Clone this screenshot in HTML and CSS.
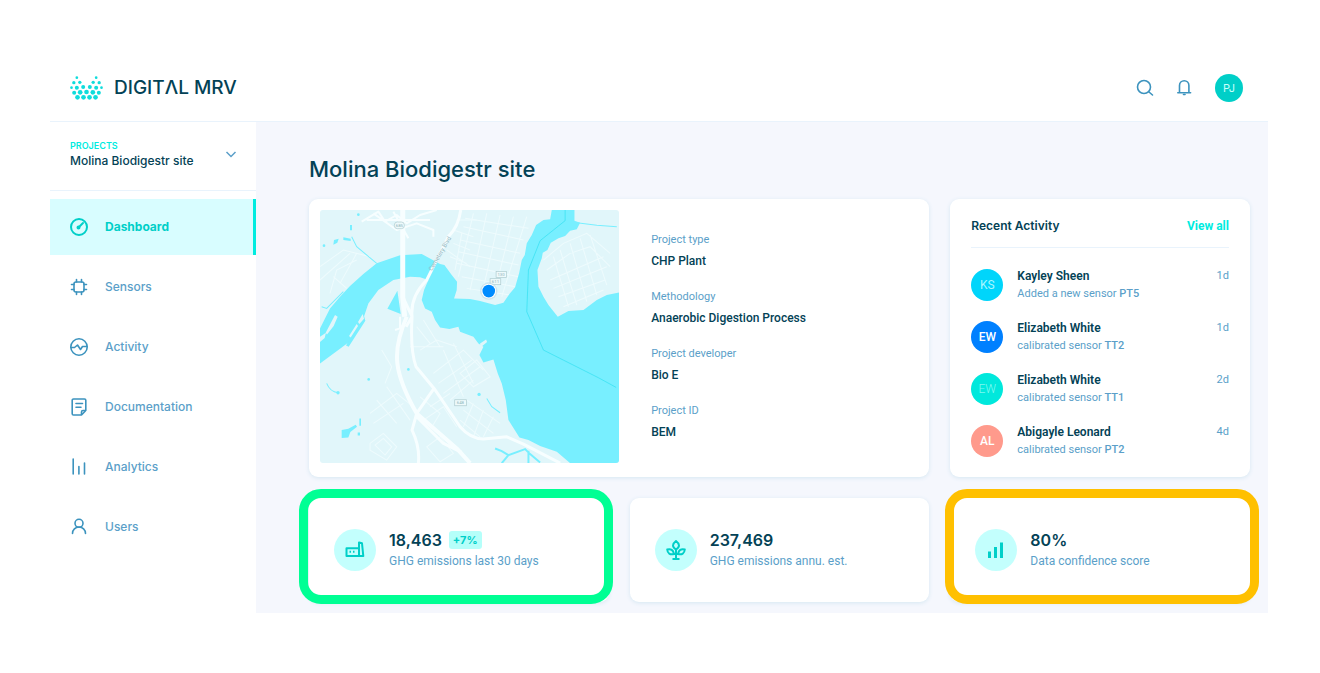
FILE: index.html
```html
<!DOCTYPE html>
<html lang="en">
<head>
<meta charset="utf-8">
<meta name="viewport" content="width=device-width, initial-scale=1">
<title>Digital MRV – Molina Biodigestr site</title>
<link rel="stylesheet" href="styles.css">
</head>
<body>
<div class="app">
  <header class="topbar">
    <a class="brand" href="#" aria-label="Digital MRV">
      <svg class="brand-mark" viewBox="0 0 98 72" fill="#0fdcdc" aria-hidden="true">
        <circle cx="20" cy="5" r="4"/><circle cx="78" cy="5" r="4"/>
        <circle cx="11" cy="20" r="5"/><circle cx="29" cy="19" r="5"/><circle cx="69" cy="19" r="5"/><circle cx="87" cy="20" r="5"/>
        <circle cx="4" cy="35" r="4"/><circle cx="20" cy="35" r="6"/><circle cx="39" cy="33" r="6"/><circle cx="59" cy="33" r="6"/><circle cx="78" cy="35" r="6"/><circle cx="94" cy="35" r="4"/>
        <circle cx="12" cy="50" r="6"/><circle cx="30" cy="49" r="7"/><circle cx="49" cy="48" r="7"/><circle cx="68" cy="49" r="7"/><circle cx="86" cy="50" r="6"/>
        <circle cx="22" cy="64" r="7"/><circle cx="40" cy="64" r="7"/><circle cx="58" cy="64" r="7"/><circle cx="76" cy="64" r="7"/>
      </svg>
      <span class="brand-name">DIGITΛL MRV</span>
    </a>
    <div class="tools">
      <button class="icon-button" type="button" aria-label="Search">
        <svg class="icon" viewBox="0 0 20 20"><circle cx="9" cy="9" r="6.500"/><path d="M14 14l3.500 3"/></svg>
      </button>
      <button class="icon-button" type="button" aria-label="Notifications">
        <svg class="icon" viewBox="0 0 20 20"><path d="M4.500 14.500V7.500a4.700 4.700 0 0 1 9.400 0V14.500M2.800 14.700h12.800"/><path d="M8.500 16.500h1.500"/></svg>
      </button>
      <button class="user" type="button">PJ</button>
    </div>
  </header>

  <div class="body">
    <aside class="sidebar">
      <div class="project">
        <label class="project-label" for="project">PROJECTS</label>
        <select class="project-select" id="project"><option>Molina Biodigestr site</option></select>
        <svg class="chevron" viewBox="0 0 12 12" aria-hidden="true"><path d="M1.500 4L6 8.500 10.500 4"/></svg>
      </div>
      <nav class="nav">
        <a class="nav-item active" href="#">
          <svg class="icon" viewBox="0 0 20 20"><circle cx="10" cy="10" r="8"/><path d="M10 10l4-4"/><circle cx="9.500" cy="10.500" r="1" fill="currentColor"/></svg>Dashboard</a>
        <a class="nav-item" href="#">
          <svg class="icon" viewBox="0 0 20 20"><rect x="5" y="5" width="10" height="10" rx="2"/><path d="M7.500 5V2.500M12.500 5V2.500M7.500 17.500V15M12.500 17.500V15M5 7.500H2.500M5 12.500H2.500M17.500 7.500H15M17.500 12.500H15"/></svg>Sensors</a>
        <a class="nav-item" href="#">
          <svg class="icon" viewBox="0 0 20 20"><circle cx="10" cy="10" r="8.200"/><path d="M2 10.500h3.500L8.500 8l3 4.500L13.500 9.500H18"/></svg>Activity</a>
        <a class="nav-item" href="#">
          <svg class="icon" viewBox="0 0 20 20"><path d="M4.500 2h11a1.300 1.300 0 0 1 1.300 1.300V13.500L12.500 18h-8a1.300 1.300 0 0 1-1.300-1.300V3.300A1.300 1.300 0 0 1 4.500 2zM12.500 18v-3a1.500 1.500 0 0 1 1.500-1.500h2.800M7 6.500h6.500M7 10.200h5"/></svg>Documentation</a>
        <a class="nav-item" href="#">
          <svg class="icon" viewBox="0 0 20 20"><path d="M4.200 2v15M9.900 9.500V17M15.500 6v11"/></svg>Analytics</a>
        <a class="nav-item" href="#">
          <svg class="icon" viewBox="0 0 20 20"><circle cx="10" cy="6.300" r="4"/><path d="M3.500 16.500a6.500 6.500 0 0 1 13 0"/></svg>Users</a>
      </nav>
    </aside>

    <main class="main">
      <h1 class="title">Molina Biodigestr site</h1>
      <div class="grid">
        <section class="card overview">
          <svg class="map" viewBox="30 30 897 759" preserveAspectRatio="xMidYMid slice" role="img" aria-label="Site map">
            <rect x="30" y="30" width="897" height="759" fill="#e1f6fa"/>
            <!-- neighbourhood streets -->
            <g fill="none" stroke="#eefbfd" stroke-width="3">
              <path d="M30 200l70-50 80 20M60 280l20-70 60-30M90 250l50-90M30 240l90-80M110 265l-40-35"/>
              <path d="M460 80l180 40M450 120l180 40M445 155l180 40M440 190l185 40M455 230l160 30M470 265l130 20M490 40l-45 190M530 40l-50 230M570 45l-55 240M610 50l-60 240M650 50l-75 240M465 55l190 30"/>
              <path d="M700 180l60-50 70-30 70 60M710 210l70-50 60-20 60 60M720 240l160-70M730 265l160-65M745 290l140-50M760 320l120-50M750 150l50 165M780 130l50 175M810 115l50 170M840 105l50 150M730 170l45 150"/>
              <path d="M180 640l80-60 50 40M190 670l90-60M230 560l70 100M200 600l60 70M180 730l40-30 40 40-30 40-50-30zM195 735l25-20 25 25-20 25z"/>
              <path d="M370 520l90-70 60 60M385 550l100-70M400 580l110-80M420 600l70-60M400 450l60 140M430 430l60 120M330 450l50-30 60 20M320 380l40 50M340 360l50 80M300 440h100"/>
              <path d="M450 520l50-40 40 50-50 30zM470 600l100 70M460 630l90 70M450 660l60 50M490 610l-30 70M520 630l-30 80M550 650l-30 60M350 740l40-30 40 50-40 25z"/>
              <path d="M330 590l60 50-30 50M360 620l60-40M340 660l60-40 40 60M215 450l30 50-20 50"/>
              <path d="M440 60h60M430 90l60 20M430 130l50 20M420 170l50 20M410 150l70 50M455 100l-20 110"/>
            </g>
            <path fill="#78efff" d="M30 385L60 325 90 290 120 258 160 222 200 190 270 166 335 162 390 192 403 195 425 225 441 245 440 270 432 295 480 297 510 303 555 315 580 308 598 282 615 262 627 220 635 180 644 165 650 130 665 105 678 75 700 60 720 58 725 30H793V62L810 68 800 88 780 92 765 108 745 115 722 128 712 150 698 158 695 175 682 210 685 260 700 290 715 315 743 350 775 333 820 330 860 300 890 285 927 277V789H780L740 755 690 738 655 720 628 712 595 660 587 600 575 550 563 520 550 478 520 487 508 465 520 440 505 430 490 410 450 395 445 380 418 387 390 382 375 360 365 335 345 325 335 300 342 270 355 240 330 232 300 230 250 240 205 270 175 310 160 355 125 420 85 450 30 490Z"/>
            <g fill="#78efff">
              <path d="M262 272l10 70-40-16zM160 340l6 22-50 78-8-4zM95 690l20-4 22-12 4 6-20 16-6 16-20 2zM148 655h5v22h-5zM143 697h7v9h-7zM72 120l14-4-4 12-12 6zM100 112l22 4v7l-22-3zM120 75h6v16h-6z"/>
              <circle cx="295" cy="508" r="4"/><circle cx="176" cy="538" r="4"/><circle cx="84" cy="578" r="5"/><circle cx="145" cy="44" r="4"/><circle cx="42" cy="137" r="4"/><circle cx="507" cy="583" r="5"/>
            </g>
            <g fill="#e1f6fa">
              <path d="M75 345l8 5-12 28-20 25-4-5zM30 410l18-12-4 16-14 12zM158 342l4 14-14 16-4-6zM140 372l4 6-22 34-5-4zM510 430l18-12 3 8-20 16z"/>
            </g>
            <g fill="none" stroke="#78efff" stroke-width="3">
              <path d="M125 110l15 30 60 50M35 320l15 5 50-50M50 550q10 25 34 28M530 595l15 25 25 18M800 68l60 8 60 4"/>
              <path stroke-width="6" d="M555 745l20 8 20 12 50-18 15 15 30 25M595 765l-20 24M655 752v37"/>
            </g>
            <g fill="none" stroke="#f7feff" stroke-linejoin="round">
              <path stroke-width="15" d="M278 30V290L284 350"/>
              <path stroke-width="12" d="M290 350Q255 430 262 490T320 640L440 745 480 789"/>
              <path stroke-width="9" d="M452 30Q445 80 415 110L350 240Q300 290 306 350 300 450 318 500L372 565 450 680Q480 715 520 717L590 710 640 732 750 789M372 565L320 640 306 690Q330 740 325 789M320 650L400 730 455 757M278 290l28 60-18 30"/>
              <path stroke-width="6" d="M155 65l50-30 20 30 35-20 30 25 40-25 50-15M190 40l70 50 60-20 50 20v20M170 60h190M250 35l45 80M270 350v35l-15 5"/>
            </g>
            <path fill="none" stroke="#31dff0" stroke-width="2" d="M765 30V62L690 122 655 210 650 335 700 450 865 533 918 562"/>
            <g fill="#eefafb" stroke="#aac9cd" stroke-width="2"><rect x="253" y="66" width="30" height="20" rx="9"/><rect x="434" y="599" width="35" height="18"/><rect x="558" y="214" width="31" height="18"/><rect x="540" y="236" width="32" height="18"/></g>
            <g class="map-text"><text x="268" y="81">685</text><text x="451" y="613">648</text><text x="573" y="228">130</text><text x="556" y="250">611</text><text class="map-road" transform="translate(366 214) rotate(-60)">Cemetery Blvd</text></g>
            <circle cx="536" cy="273" r="26" fill="#bfdbe6" opacity=".6"/><circle cx="536" cy="273" r="22" fill="#fff"/><circle cx="536" cy="273" r="19" fill="#008cff"/>
          </svg>
          <dl class="facts">
            <div><dt>Project type</dt><dd>CHP Plant</dd></div>
            <div><dt>Methodology</dt><dd>Anaerobic Digestion Process</dd></div>
            <div><dt>Project developer</dt><dd>Bio E</dd></div>
            <div><dt>Project ID</dt><dd>BEM</dd></div>
          </dl>
        </section>

        <section class="card activity">
          <div class="activity-head"><h2>Recent Activity</h2><a href="#">View all</a></div>
          <ul class="feed">
            <li><span class="avatar sky">KS</span><div class="entry"><strong>Kayley Sheen</strong><p>Added a new sensor <b>PT5</b></p></div><time>1d</time></li>
            <li><span class="avatar blue">EW</span><div class="entry"><strong>Elizabeth White</strong><p>calibrated sensor <b>TT2</b></p></div><time>1d</time></li>
            <li><span class="avatar mint">EW</span><div class="entry"><strong>Elizabeth White</strong><p>calibrated sensor <b>TT1</b></p></div><time>2d</time></li>
            <li><span class="avatar coral">AL</span><div class="entry"><strong>Abigayle Leonard</strong><p>calibrated sensor <b>PT2</b></p></div><time>4d</time></li>
          </ul>
        </section>

        <section class="card stat mark-green">
          <span class="stat-icon"><svg viewBox="0 0 20 20"><path d="M1.500 8.300H14V16H1.500zM14 16V2.500l3 .8 1.300 12.700z"/><path d="M4.500 11.800h1.500M8 11.800h1.500"/></svg></span>
          <div><p class="value">18,463 <span class="badge">+7%</span></p><p class="caption">GHG emissions last 30 days</p></div>
        </section>
        <section class="card stat">
          <span class="stat-icon"><svg viewBox="0 0 20 20"><path d="M10 1c-4 3-4 6 0 8.500C14 7 14 4 10 1zM10 9.500V19M6.500 19h7M1.200 9.500c3.800-1 6 .5 6.800 4.500-4 1-6.400-.5-6.800-4.500zM18.800 9.500c-3.800-1-6 .5-6.800 4.500 4 1 6.400-.5 6.800-4.500zM8 14h4"/></svg></span>
          <div><p class="value">237,469</p><p class="caption">GHG emissions annu. est.</p></div>
        </section>
        <section class="card stat mark-amber">
          <span class="stat-icon"><svg viewBox="0 0 20 20"><path class="bars" d="M3.500 11.500V18M9.500 7v11M15.500 2.500V18"/></svg></span>
          <div><p class="value">80%</p><p class="caption">Data confidence score</p></div>
        </section>
      </div>
    </main>
  </div>
</div>
</body>
</html>
```

FILE: styles.css
```css
:root {
  --ink: #034256;
  --muted: #5b9fc9;
  --icon: #3c93be;
  --teal: #00cfc8;
  --bright: #00ecdf;
  --line: #e9f3fc;
  --display: Inter, "Open Sans", sans-serif;
}

* { box-sizing: border-box; }

body {
  margin: 0;
  padding: 55px 52px 59px 50px;
  background: #fff;
  color: var(--ink);
  font: 12px/20px Roboto, sans-serif;
}

h1, h2, p, ul, dl, dd { margin: 0; padding: 0; }
a { text-decoration: none; }
button { border: 0; background: none; padding: 0; font: inherit; cursor: pointer; }

.topbar {
  display: flex;
  align-items: center;
  justify-content: space-between;
  height: 67px;
  padding: 0 25px 0 20px;
  border-bottom: 1px solid var(--line);
}
.brand { display: flex; align-items: center; gap: 11px; color: var(--ink); }
.brand-mark { width: 33px; height: 24px; }
.brand-name { font: 500 19px/24px var(--display); }
.tools { display: flex; align-items: center; gap: 20px; }
.icon-button { display: flex; color: var(--icon); }
.icon {
  width: 20px;
  height: 20px;
  fill: none;
  stroke: currentColor;
  stroke-width: 1.6;
  stroke-linecap: round;
  stroke-linejoin: round;
}
.user {
  width: 28px;
  height: 28px;
  border-radius: 50%;
  background: var(--teal);
  color: #c8fffb;
  font: 11px/28px var(--display);
}

.body { display: flex; }

.sidebar { flex: 0 0 206px; }
.project {
  display: grid;
  grid-template-columns: 1fr 12px;
  align-content: center;
  align-items: center;
  height: 69px;
  padding: 0 19px 4px 20px;
  border-bottom: 1px solid var(--line);
}
.project-label {
  color: var(--bright);
  font: 600 9px/14px var(--display);
}
.project-select {
  grid-row: 2;
  width: 100%;
  padding: 0;
  border: 0;
  appearance: none;
  background: none;
  color: var(--ink);
  font: 500 12px/16px var(--display);
}
.chevron {
  grid-area: 1 / 2 / 3 / 3;
  width: 12px;
  height: 12px;
  fill: none;
  stroke: var(--muted);
  stroke-width: 1.5;
}
.nav { display: flex; flex-direction: column; gap: 4px; padding-top: 8px; }
.nav-item {
  display: flex;
  align-items: center;
  gap: 16px;
  height: 56px;
  padding-left: 19px;
  color: var(--muted);
  font: 500 12px/20px var(--display);
}
.nav-item .icon { color: var(--icon); }
.nav-item.active {
  border-right: 3px solid var(--bright);
  background: #d8fdff;
  color: var(--teal);
  font-weight: 700;
}
.nav-item.active .icon { color: var(--teal); stroke-width: 2; }

.main {
  flex: 1;
  min-width: 0;
  padding: 31px 18px 11px 53px;
  background: #f5f7fd;
}
.title { margin-bottom: 14px; font: 500 22px/32px var(--display); }
.grid { display: grid; grid-template-columns: repeat(3, minmax(0, 1fr)); gap: 21px; }
.card {
  position: relative;
  border-radius: 9px;
  background: #fff;
  box-shadow: 0 1px 4px #d5e7f2;
}

.overview {
  grid-column: span 2;
  display: grid;
  grid-template-columns: 1fr 1fr;
  align-items: start;
  padding: 11px;
}
.map { display: block; width: 100%; aspect-ratio: 299 / 253; border-radius: 3px; }
.map-text { fill: #8fb5bd; font-size: 13px; text-anchor: middle; }
.map-road { font-size: 18px; text-anchor: start; }
.facts { display: grid; gap: 15px; padding: 20px 0 0 32px; }
.facts dt { color: var(--muted); font-size: 11px; line-height: 20px; }
.facts dd { font-weight: 500; line-height: 22px; }

.activity { padding: 16px 21px 18px; }
.activity-head {
  display: flex;
  justify-content: space-between;
  padding-bottom: 10px;
  border-bottom: 1px solid var(--line);
  line-height: 22px;
}
.activity-head h2 { font: 600 12px/22px var(--display); }
.activity-head a { color: var(--bright); font-weight: 700; }
.feed { display: grid; gap: 16px; padding-top: 19px; list-style: none; }
.feed li { display: flex; align-items: center; line-height: 18px; }
.avatar {
  width: 32px;
  height: 32px;
  margin-right: 14px;
  border-radius: 50%;
  color: #fff;
  line-height: 32px;
  text-align: center;
}
.sky { background: #00d5fb; color: #a8f5ff; }
.blue { background: #0080ff; font-weight: 500; }
.mint { background: #00e8dc; color: #7ff8ef; font-weight: 300; }
.coral { background: #ff9a8c; font-weight: 500; }
.entry { flex: 1; }
.entry strong { display: block; font-weight: 600; }
.entry p { color: var(--muted); font-size: 11px; }
.entry b { font-weight: 500; }
.feed time { align-self: flex-start; color: var(--muted); font-size: 11px; }

.stat { display: flex; align-items: center; gap: 13px; height: 104px; padding: 0 25px; }
.stat-icon {
  display: flex;
  align-items: center;
  justify-content: center;
  width: 42px;
  height: 42px;
  border-radius: 50%;
  background: #c3fffd;
}
.stat-icon svg {
  width: 20px;
  height: 20px;
  fill: none;
  stroke: var(--teal);
  stroke-width: 2;
  stroke-linejoin: round;
}
.stat-icon .bars { stroke-width: 3; }
.value { display: flex; align-items: center; gap: 7px; font: 600 16px/22px var(--display); }
.badge {
  padding: 0 4px;
  border-radius: 3px;
  background: #b5fffa;
  color: var(--teal);
  font-size: 11px;
  font-weight: 700;
  line-height: 18px;
}
.caption { color: var(--muted); }

/* highlight frames drawn over the card edges */
.mark-green::after,
.mark-amber::after {
  content: "";
  position: absolute;
  border: 9px solid #00ff94;
  border-radius: 22px;
  pointer-events: none;
}
.mark-green::after { inset: -9px -4px -2px -10px; }
.mark-amber::after { inset: -9px -9px -2px -5px; border-color: #ffc000; }
```
